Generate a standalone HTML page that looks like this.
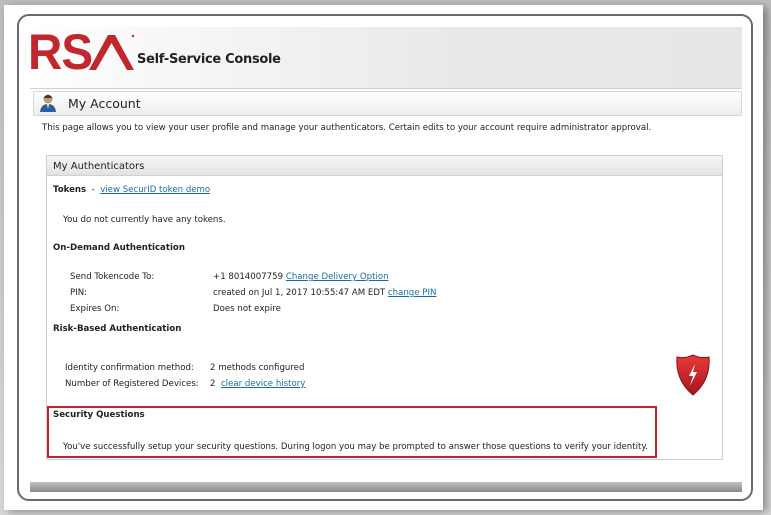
<!DOCTYPE html>
<html><head><meta charset="utf-8"><style>
*{margin:0;padding:0;box-sizing:border-box}
body{width:771px;height:515px;overflow:hidden;background:linear-gradient(to bottom,#bdbdbd,#d8d8d8);position:relative;font-family:"DejaVu Sans",Verdana,sans-serif;font-size:8.6px;color:#222}
.a{position:absolute;white-space:nowrap}
.paper{left:4px;top:5px;width:759px;height:505px;background:#fff;box-shadow:4px 2px 8px rgba(0,0,0,.35)}
.frame{left:17px;top:14px;width:736px;height:487px;border:2px solid #6a6a6a;border-radius:12px;background:#fff}
.hdr{left:30px;top:27px;width:712px;height:62px;background:linear-gradient(to right,#fff 0%,#f3f3f3 30%,#e8e9ea 60%,#e6e7e8 100%);border-bottom:1px solid #cfcfcf}
.bar{left:33px;top:91px;width:709px;height:25px;border:1px solid #d8d8d8;background:linear-gradient(#fff,#ececec)}
a,.l{color:#1a6fa0;text-decoration:underline}
b{font-weight:bold}
.box{left:46px;top:155px;width:677px;height:305px;border:1px solid #cfcfcf}
.bh{left:47px;top:156px;width:675px;height:20px;background:linear-gradient(#f6f6f6,#e2e2e2);border-bottom:1px solid #d0d0d0}
.red{left:47px;top:406px;width:610px;height:52px;border:2px solid #c4242e}
.bot{left:30px;top:482px;width:712px;height:10px;background:linear-gradient(#bfbfbf,#8a8a8a)}
</style></head><body>
<div class="a paper"></div>
<div class="a frame"></div>
<div class="a hdr"></div>
<div class="a" style="left:28px;top:27px;font-family:'Liberation Sans',sans-serif;font-weight:bold;font-size:50px;color:#c0282e;letter-spacing:-1px;line-height:50px;transform:scaleX(0.95);transform-origin:left">RS</div>
<svg class="a" style="left:88px;top:32px" width="50" height="40" viewBox="0 0 50 40"><path d="M1 38 L20 3 L27 3 L46 38 L39 38 L23.5 11 L8 38 Z" fill="#c0282e"/><circle cx="45" cy="4" r="1.2" fill="#c0282e"/></svg>
<div class="a" style="left:137px;top:52px;font-size:13px;font-weight:bold;color:#222;font-family:'DejaVu Sans',sans-serif;letter-spacing:-0.3px">Self-Service Console</div>
<div class="a bar"></div>
<svg class="a" style="left:39px;top:93px" width="18" height="20" viewBox="0 0 18 20"><circle cx="9" cy="6" r="4.5" fill="#c79a6e"/><path d="M4.5 5 Q9 -1 13.5 5 Z" fill="#333"/><path d="M1 19 Q2 11 9 11 Q16 11 17 19 Z" fill="#2b5f9e"/><path d="M8 11 L9 16 L10 11Z" fill="#fff"/></svg>
<div class="a" style="left:68px;top:96px;font-size:12.5px;color:#222">My Account</div>
<div class="a" style="left:42px;top:123px">This page allows you to view your user profile and manage your authenticators. Certain edits to your account require administrator approval.</div>
<div class="a box"></div>
<div class="a bh"></div>
<div class="a" style="left:53px;top:161px;font-size:10px">My Authenticators</div>
<div class="a" style="left:53px;top:185px"><b>Tokens</b> &nbsp;- &nbsp;<span class="l">view SecurID token demo</span></div>
<div class="a" style="left:63px;top:215px">You do not currently have any tokens.</div>
<div class="a" style="left:53px;top:243px"><b>On-Demand Authentication</b></div>
<div class="a" style="left:70px;top:272px">Send Tokencode To:</div>
<div class="a" style="left:213px;top:272px">+1 8014007759 <span class="l">Change Delivery Option</span></div>
<div class="a" style="left:70px;top:288px">PIN:</div>
<div class="a" style="left:213px;top:288px">created on Jul 1, 2017 10:55:47 AM EDT <span class="l">change PIN</span></div>
<div class="a" style="left:70px;top:304px">Expires On:</div>
<div class="a" style="left:213px;top:304px">Does not expire</div>
<div class="a" style="left:53px;top:324px"><b>Risk-Based Authentication</b></div>
<div class="a" style="left:65px;top:363px">Identity confirmation method:</div>
<div class="a" style="left:210px;top:363px">2 methods configured</div>
<div class="a" style="left:65px;top:379px">Number of Registered Devices:</div>
<div class="a" style="left:210px;top:379px">2 &nbsp;<span class="l">clear device history</span></div>
<svg class="a" style="left:675px;top:354px" width="36" height="42" viewBox="0 0 36 42"><defs><linearGradient id="g" x1="0" y1="0" x2="0" y2="1"><stop offset="0" stop-color="#e83a3a"/><stop offset="1" stop-color="#a8141a"/></linearGradient></defs><path d="M18 1 Q26 5 34 3 Q36 26 18 41 Q0 26 2 3 Q10 5 18 1Z" fill="url(#g)" stroke="#8b1014" stroke-width="1"/><path d="M20 10 L14 22 L18 22 L15 32 L22 18 L18 18 Z" fill="#fff"/></svg>
<div class="a red"></div>
<div class="a" style="left:53px;top:410px"><b>Security Questions</b></div>
<div class="a" style="left:63px;top:442px">You've successfully setup your security questions. During logon you may be prompted to answer those questions to verify your identity.</div>
<div class="a bot"></div>
</body></html>
